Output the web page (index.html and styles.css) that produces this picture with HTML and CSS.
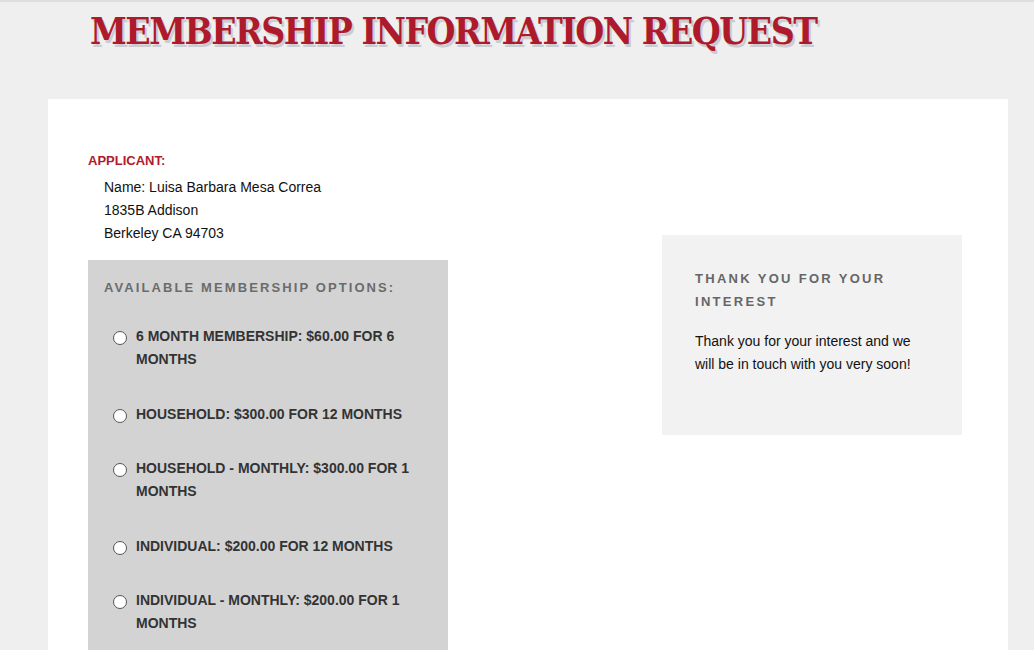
FILE: index.html
```html
<!DOCTYPE html>
<html lang="en">
<head>
<meta charset="utf-8">
<title>Membership Information Request</title>
<link rel="stylesheet" href="styles.css">
</head>
<body>
<header class="page-header">
  <h1 class="page-title">MEMBERSHIP INFORMATION REQUEST</h1>
</header>
<main class="card">
  <div class="col-left">
    <h2 class="applicant-label">APPLICANT:</h2>
    <div class="applicant">
      <div>Name: Luisa Barbara Mesa Correa</div>
      <div>1835B Addison</div>
      <div>Berkeley CA 94703</div>
    </div>
    <section class="options">
      <h3 class="options-title">AVAILABLE MEMBERSHIP OPTIONS:</h3>
      <ul class="option-list">
        <li class="option"><span class="radio"></span><span class="option-text">6 MONTH MEMBERSHIP: $60.00 FOR 6 MONTHS</span></li>
        <li class="option"><span class="radio"></span><span class="option-text">HOUSEHOLD: $300.00 FOR 12 MONTHS</span></li>
        <li class="option"><span class="radio"></span><span class="option-text">HOUSEHOLD - MONTHLY: $300.00 FOR 1 MONTHS</span></li>
        <li class="option"><span class="radio"></span><span class="option-text">INDIVIDUAL: $200.00 FOR 12 MONTHS</span></li>
        <li class="option"><span class="radio"></span><span class="option-text">INDIVIDUAL - MONTHLY: $200.00 FOR 1 MONTHS</span></li>
      </ul>
    </section>
  </div>
  <aside class="thanks">
    <h3 class="thanks-title">THANK YOU FOR YOUR INTEREST</h3>
    <p class="thanks-text">Thank you for your interest and we will be in touch with you very soon!</p>
  </aside>
</main>
</body>
</html>
```
FILE: styles.css
```css
html, body {
  margin: 0;
  padding: 0;
}
body {
  background: #efefef;
  border-top: 2px solid #dedede;
  font-family: "Liberation Sans", Arial, sans-serif;
  color: #111;
  height: 648px;
  overflow: hidden;
}
.page-header {
  padding: 0 0 0 90px;
  height: 97px;
}
.page-title {
  display: inline-block;
  margin: 0;
  padding-top: 7px;
  font-family: "DejaVu Serif", serif;
  font-stretch: condensed;
  font-weight: bold;
  font-size: 37px;
  line-height: 44px;
  letter-spacing: -1.5px;
  color: #ad1a2c;
  text-shadow: 2px 3px 0 #cbcbd2;
  white-space: nowrap;
}
.card {
  background: #fff;
  margin: 0 26px 0 48px;
  padding: 53px 46px 0 40px;
  display: flex;
  justify-content: space-between;
  align-items: flex-start;
  min-height: 560px;
}
.col-left {
  width: 360px;
}
.applicant-label {
  margin: 0;
  font-size: 13px;
  font-weight: bold;
  line-height: 18px;
  color: #b01a2d;
}
.applicant {
  padding-left: 16px;
  font-size: 14px;
  line-height: 23px;
  margin-top: 6px;
}
.options {
  background: #d3d3d3;
  margin-top: 15px;
  padding: 19px 16px 1px 16px;
}
.options-title {
  margin: 0 0 28px;
  font-size: 13px;
  font-weight: bold;
  letter-spacing: 2.1px;
  line-height: 18px;
  color: #6b6b6b;
}
.option-list {
  list-style: none;
  margin: 0;
  padding: 0;
}
.option {
  display: flex;
  align-items: flex-start;
  margin-bottom: 31.5px;
}
.radio {
  flex: none;
  width: 12px;
  height: 12px;
  border: 1px solid #555;
  border-radius: 50%;
  background: #fff;
  margin: 6px 9px 0 9px;
}
.option-text {
  font-size: 14px;
  font-weight: bold;
  line-height: 23px;
  color: #333;
  padding-right: 10px;
}
.thanks {
  width: 300px;
  height: 200px;
  box-sizing: border-box;
  margin-top: 83px;
  background: #f2f2f2;
  padding: 32px 33px;
}
.thanks-title {
  margin: 0 0 17px;
  font-size: 13px;
  font-weight: bold;
  letter-spacing: 2.3px;
  line-height: 23px;
  color: #666;
}
.thanks-text {
  margin: 0;
  font-size: 14px;
  line-height: 23px;
  color: #111;
}
```
